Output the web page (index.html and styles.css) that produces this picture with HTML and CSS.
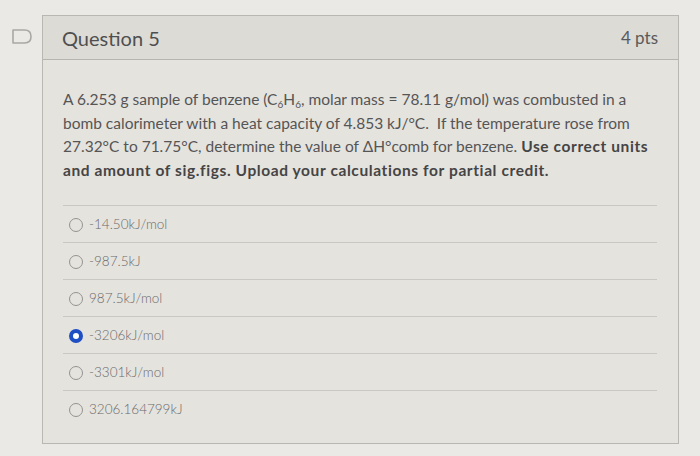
FILE: index.html
```html
<!DOCTYPE html>
<html>
<head>
<meta charset="utf-8">
<link rel="stylesheet" href="styles.css">
</head>
<body>
<div class="page">
  <div class="flag">
    <svg width="22" height="17" viewBox="0 0 22 17"><path d="M2 2 H13.5 Q20 2 20 8.5 Q20 15 13.5 15 H2 Z" fill="none" stroke="#a9a8a4" stroke-width="1.6" stroke-linejoin="round"/></svg>
  </div>
  <div class="card">
    <div class="card-header">
      <span class="q-title">Question 5</span>
      <span class="q-pts">4 pts</span>
    </div>
    <div class="card-body">
      <p class="q-text">A 6.253 g sample of benzene (C<sub>6</sub>H<sub>6</sub>, molar mass = 78.11 g/mol) was combusted in a bomb calorimeter with a heat capacity of 4.853 kJ/°C.&nbsp; If the temperature rose from 27.32°C to 71.75°C, determine the value of ΔH°comb for benzene. <span class="strong">Use correct units and amount of sig.figs. Upload your calculations for partial credit.</span></p>
      <div class="answers">
        <div class="answer"><span class="radio"></span><span class="a-text">-14.50kJ/mol</span></div>
        <div class="answer"><span class="radio"></span><span class="a-text">-987.5kJ</span></div>
        <div class="answer"><span class="radio"></span><span class="a-text">987.5kJ/mol</span></div>
        <div class="answer"><span class="radio checked"></span><span class="a-text">-3206kJ/mol</span></div>
        <div class="answer"><span class="radio"></span><span class="a-text">-3301kJ/mol</span></div>
        <div class="answer"><span class="radio"></span><span class="a-text">3206.164799kJ</span></div>
      </div>
    </div>
  </div>
</div>
</body>
</html>
```
FILE: styles.css
```css
html, body {
  margin: 0;
  padding: 0;
}
body {
  background: #eae9e5;
  font-family: Lato, "Open Sans", sans-serif;
  width: 700px;
  height: 456px;
  overflow: hidden;
}
.page {
  display: flex;
  align-items: flex-start;
  padding-top: 15px;
}
.flag {
  width: 42px;
  padding-top: 13px;
  padding-left: 11px;
  box-sizing: border-box;
  flex: none;
}
.flag svg {
  display: block;
}
.card {
  width: 637px;
  height: 429px;
  box-sizing: border-box;
  border: 1px solid #b8b7b2;
  background: #e5e3de;
  flex: none;
}
.card-header {
  height: 44px;
  box-sizing: border-box;
  background: #dcdbd6;
  border-bottom: 1px solid #b5b4af;
  display: flex;
  align-items: center;
  justify-content: space-between;
  padding: 0 20px 0 19px;
}
.q-title {
  font-size: 20px;
  color: #4f4f4f;
}
.q-pts {
  font-size: 17px;
  color: #5a5a5a;
}
.card-body {
  padding: 28px 21px 0 20px;
}
.q-text {
  margin: 0;
  font-size: 15.5px;
  line-height: 23.7px;
  color: #555;
}
.q-text sub {
  font-size: 10px;
  line-height: 0;
  vertical-align: -3px;
}
.strong {
  font-weight: 700;
  letter-spacing: 0.6px;
  color: #454545;
}
.answers {
  margin-top: 22px;
}
.answer {
  height: 37px;
  box-sizing: border-box;
  border-top: 1.5px solid #c9c8c3;
  display: flex;
  align-items: center;
  padding-left: 6px;
  gap: 6px;
}
.radio {
  width: 14px;
  height: 14px;
  box-sizing: border-box;
  border: 1.5px solid #949390;
  border-radius: 50%;
  flex: none;
  margin-top: 2px;
}
.radio.checked {
  border: 4px solid #1f4fc4;
  background: #fff;
}
.a-text {
  font-size: 13.5px;
  color: #6a6a6a;
  font-weight: 300;
}
```
